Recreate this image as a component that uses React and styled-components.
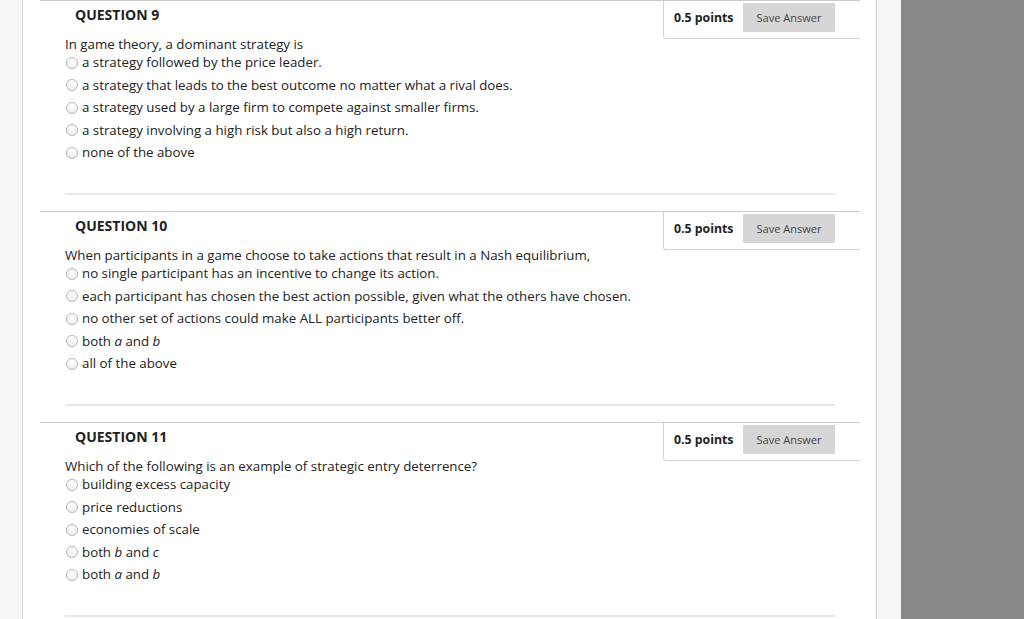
import React from 'react';
import styled, { createGlobalStyle } from 'styled-components';

const GlobalStyle = createGlobalStyle`
  html, body {
    margin: 0;
    padding: 0;
    height: 100%;
    overflow: hidden;
  }
  body {
    font-family: "Open Sans", "Liberation Sans", sans-serif;
    color: #333;
    background: #fff;
  }
`;

const Page = styled.div`
  display: flex;
  height: 619px;
  overflow: hidden;
`;

const Gutter = styled.div`
  flex: 0 0 ${p => p.width}px;
  background: #f6f6f6;
  border-right: ${p => (p.bordered ? '1px solid #d6d6d6' : 'none')};
`;

const Main = styled.div`
  flex: 0 0 854px;
  background: #fff;
  border-right: 1px solid #cfcfcf;
  padding-left: 17px;
  box-sizing: border-box;
`;

const SidePanel = styled.div`
  flex: 1;
  background: #888888;
`;

const Question = styled.section`
  width: 820px;
  border-top: 1px solid #cccccc;
  margin-bottom: 16px;
`;

const Header = styled.div`
  display: flex;
  justify-content: space-between;
  align-items: flex-start;
`;

const Title = styled.h3`
  margin: 0;
  padding: 5px 0 0 35px;
  font-size: 14px;
  line-height: 18px;
  font-weight: 700;
  color: #222;
`;

const PointsBox = styled.div`
  display: flex;
  align-items: center;
  justify-content: space-between;
  width: 197px;
  height: 38px;
  box-sizing: border-box;
  padding: 0 25px 4px 10px;
  border-left: 1px solid #d3d3d3;
  border-bottom: 1px solid #d3d3d3;
  border-bottom-left-radius: 3px;
`;

const Points = styled.span`
  font-size: 12.3px;
  font-weight: 700;
  color: #222;
  white-space: nowrap;
`;

const SaveButton = styled.button`
  width: 92px;
  height: 29px;
  border: none;
  border-radius: 1px;
  background: #d6d6d6;
  color: #444;
  font-family: "Open Sans", "Liberation Sans", sans-serif;
  font-size: 11px;
  padding: 0;
  cursor: pointer;
`;

const Body = styled.div`
  margin: -4px 25px 0 25px;
`;

const Prompt = styled.p`
  margin: 0;
  font-size: 13.3px;
  line-height: 18px;
  color: #222;
`;

const Options = styled.div`
  display: flex;
  flex-direction: column;
  gap: 4.5px;
`;

const Option = styled.label`
  display: flex;
  align-items: center;
  height: 18px;
  font-size: 13.3px;
  color: #222;
  cursor: pointer;
`;

const Radio = styled.span`
  display: inline-block;
  width: 10px;
  height: 10px;
  margin: 1px 4px 0 1px;
  border: 1px solid #b4b4b4;
  border-radius: 50%;
  background: linear-gradient(#ffffff, #efefef);
  flex: 0 0 auto;
`;

const Divider = styled.hr`
  margin: 32px 0 0 0;
  border: none;
  height: 2px;
  background: #e8e8e8;
`;

const questions = [
  {
    n: 9,
    prompt: 'In game theory, a dominant strategy is',
    options: [
      'a strategy followed by the price leader.',
      'a strategy that leads to the best outcome no matter what a rival does.',
      'a strategy used by a large firm to compete against smaller firms.',
      'a strategy involving a high risk but also a high return.',
      'none of the above',
    ],
  },
  {
    n: 10,
    prompt: 'When participants in a game choose to take actions that result in a Nash equilibrium,',
    options: [
      'no single participant has an incentive to change its action.',
      'each participant has chosen the best action possible, given what the others have chosen.',
      'no other set of actions could make ALL participants better off.',
      <>both <i>a</i> and <i>b</i></>,
      'all of the above',
    ],
  },
  {
    n: 11,
    prompt: 'Which of the following is an example of strategic entry deterrence?',
    options: [
      'building excess capacity',
      'price reductions',
      'economies of scale',
      <>both <i>b</i> and <i>c</i></>,
      <>both <i>a</i> and <i>b</i></>,
    ],
  },
];

function QuestionBlock({ q }) {
  return (
    <Question>
      <Header>
        <Title>QUESTION {q.n}</Title>
        <PointsBox>
          <Points>0.5 points</Points>
          <SaveButton>Save Answer</SaveButton>
        </PointsBox>
      </Header>
      <Body>
        <Prompt>{q.prompt}</Prompt>
        <Options>
          {q.options.map((o, i) => (
            <Option key={i}>
              <Radio />
              <span>{o}</span>
            </Option>
          ))}
        </Options>
        <Divider />
      </Body>
    </Question>
  );
}

export default function App() {
  return (
    <>
      <GlobalStyle />
      <Page>
        <Gutter width={22} bordered />
        <Main>
          {questions.map(q => (
            <QuestionBlock key={q.n} q={q} />
          ))}
        </Main>
        <Gutter width={24} />
        <SidePanel />
      </Page>
    </>
  );
}
